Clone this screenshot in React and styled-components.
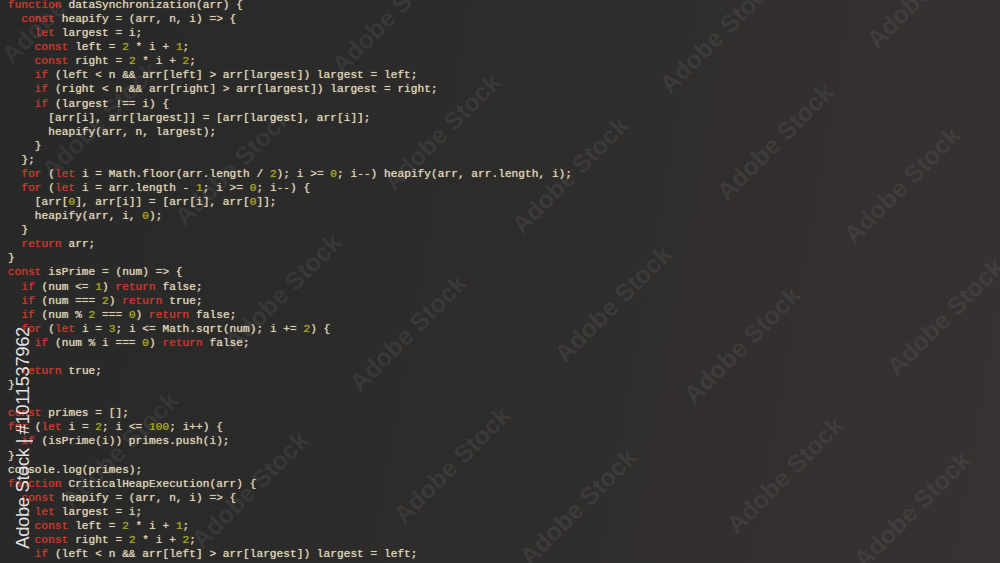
import React from "react";
import styled, { createGlobalStyle } from "styled-components";

const GlobalStyle = createGlobalStyle`
  html, body {
    margin: 0;
    padding: 0;
    background: #2b2b2b;
  }
  #root {
    width: 100vw;
    height: 100vh;
  }
`;

const codeLines = [
  "function dataSynchronization(arr) {",
  "  const heapify = (arr, n, i) => {",
  "    let largest = i;",
  "    const left = 2 * i + 1;",
  "    const right = 2 * i + 2;",
  "    if (left < n && arr[left] > arr[largest]) largest = left;",
  "    if (right < n && arr[right] > arr[largest]) largest = right;",
  "    if (largest !== i) {",
  "      [arr[i], arr[largest]] = [arr[largest], arr[i]];",
  "      heapify(arr, n, largest);",
  "    }",
  "  };",
  "  for (let i = Math.floor(arr.length / 2); i >= 0; i--) heapify(arr, arr.length, i);",
  "  for (let i = arr.length - 1; i >= 0; i--) {",
  "    [arr[0], arr[i]] = [arr[i], arr[0]];",
  "    heapify(arr, i, 0);",
  "  }",
  "  return arr;",
  "}",
  "const isPrime = (num) => {",
  "  if (num <= 1) return false;",
  "  if (num === 2) return true;",
  "  if (num % 2 === 0) return false;",
  "  for (let i = 3; i <= Math.sqrt(num); i += 2) {",
  "    if (num % i === 0) return false;",
  "",
  "  return true;",
  "}",
  "",
  "const primes = [];",
  "for (let i = 2; i <= 100; i++) {",
  "  if (isPrime(i)) primes.push(i);",
  "}",
  "console.log(primes);",
  "function CriticalHeapExecution(arr) {",
  "  const heapify = (arr, n, i) => {",
  "    let largest = i;",
  "    const left = 2 * i + 1;",
  "    const right = 2 * i + 2;",
  "    if (left < n && arr[left] > arr[largest]) largest = left;",
];

// watermark centres, read off the reference
const marks = [
  [60, 5], [390, 15], [718, 35], [925, -10],
  [100, 120], [442, 132], [775, 142],
  [233, 167], [570, 175], [902, 185],
  [283, 292], [613, 304], [945, 317],
  [408, 333], [742, 345],
  [120, 450], [452, 465], [785, 475],
  [250, 490], [578, 507], [912, 510],
];

const KEYWORDS = /(\b(?:function|const|let|if|return|for)\b|\b\d+\b)/;

function tokenize(line) {
  return line
    .split(KEYWORDS)
    .filter((part) => part !== "")
    .map((part) => {
      if (/^\d+$/.test(part)) return { text: part, kind: "number" };
      if (/^(function|const|let|if|return|for)$/.test(part))
        return { text: part, kind: "keyword" };
      return { text: part, kind: "plain" };
    });
}

const tokenColors = {
  keyword: "#c4392c",
  number: "#a3a21f",
  plain: "#d8cfb1",
};

function App() {
  return (
    <>
      <GlobalStyle />
      <Screen>
        <Code>
          {codeLines.map((line, ix) => (
            <Line key={ix}>
              {tokenize(line).map((tok, j) => (
                <Token key={j} $kind={tok.kind}>
                  {tok.text}
                </Token>
              ))}
            </Line>
          ))}
        </Code>

        {marks.map(([x, y], ix) => (
          <Watermark key={ix} style={{ left: x, top: y }}>
            Adobe Stock
          </Watermark>
        ))}

        <StockId>Adobe Stock | #1011537962</StockId>
      </Screen>
    </>
  );
}
export default App;

const Screen = styled.div`
  position: relative;
  width: 100%;
  height: 100%;
  overflow: hidden;
  background: linear-gradient(100deg, #282828 0%, #2d2c2b 45%, #363231 100%);
`;

const Code = styled.div`
  display: flex;
  flex-direction: column;
  margin-top: -2px;
  padding-left: 8px;
  font-family: "Liberation Mono", "Courier New", monospace;
  font-size: 11.2px;
  line-height: 14.08px;
  color: #d8cfb1;
`;

const Line = styled.div`
  height: 14.08px;
  white-space: pre;
`;

const Token = styled.span`
  color: ${(p) => tokenColors[p.$kind]};
  text-shadow: 0 0 0.8px ${(p) => tokenColors[p.$kind]};
`;

const Watermark = styled.div`
  position: absolute;
  transform: translate(-50%, -50%) rotate(-45deg);
  font-family: "Liberation Sans", Arial, sans-serif;
  font-weight: bold;
  font-size: 25px;
  white-space: nowrap;
  color: rgba(255, 255, 255, 0.075);
  pointer-events: none;
`;

const StockId = styled.div`
  position: absolute;
  left: 12px;
  bottom: 14px;
  writing-mode: vertical-rl;
  transform: rotate(180deg);
  font-family: "Liberation Sans", Arial, sans-serif;
  font-size: 18.5px;
  letter-spacing: -0.4px;
  color: rgba(245, 245, 245, 0.92);
  white-space: nowrap;
`;
